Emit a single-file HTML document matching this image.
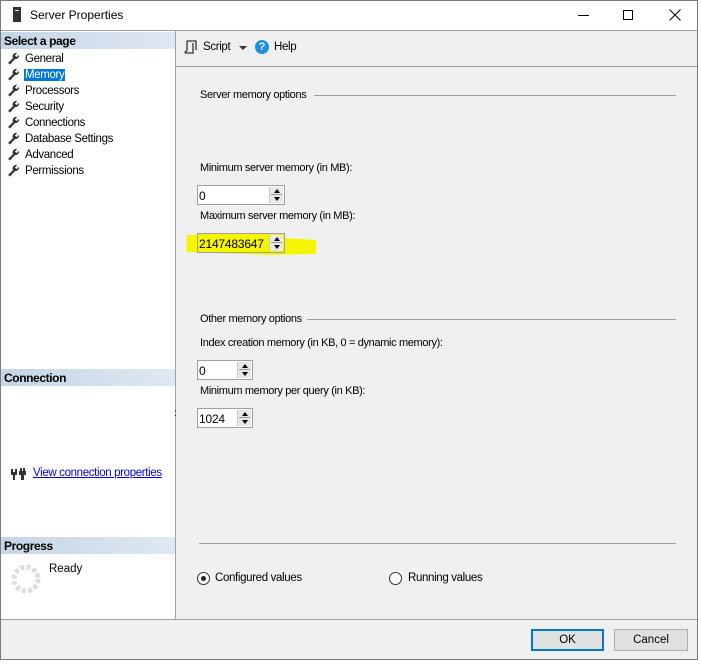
<!DOCTYPE html>
<html><head><style>
*{margin:0;padding:0;box-sizing:border-box}
body{width:701px;height:666px;background:#fff;font-family:"Liberation Sans",sans-serif;font-size:11px;color:#000;position:relative;overflow:hidden}
.a{position:absolute;white-space:nowrap}
.win{position:absolute;left:0;top:0;width:698px;height:660px;background:#f0f0f0}
.frame{position:absolute;left:0;top:0;width:698px;height:660px;border:1px solid #7a7a7a;pointer-events:none}
.hdr{position:absolute;left:1px;width:174px;height:17px;background:linear-gradient(to right,#c5d5e6,#dfe8f2);font-weight:bold;font-size:12px;padding:2px 3px;letter-spacing:-0.4px}
.box{position:absolute;background:#fff;border:1px solid #a0a0a0;height:20px}
.box span{position:absolute;left:1px;top:3px;font-size:12px;letter-spacing:-0.2px}
.sp{position:absolute;right:1px;top:1px;width:14px;height:16px;background:#e8e8e8;border-left:1px solid #c8c8c8}
.sp:before{content:"";position:absolute;left:4px;top:2px;border:3px solid transparent;border-bottom:4px solid #000;border-top:0}
.sp:after{content:"";position:absolute;left:4px;top:10px;border:3px solid transparent;border-top:4px solid #000;border-bottom:0}
.sp i{position:absolute;left:1px;right:1px;top:7px;height:1px;background:#999}
.ln{position:absolute;height:1px;background:#a0a0a0}
.t{letter-spacing:-0.35px}
</style></head><body>
<div class="win">
<div class="a" style="left:0;top:0;width:698px;height:31px;background:#fff;border-bottom:1px solid #a0a0a0"></div>
<div class="a" style="left:13px;top:7px;width:8px;height:15px;background:#333"></div>
<div class="a" style="left:15px;top:10px;width:4px;height:1px;background:#fff"></div>
<div class="a" style="left:30px;top:8px;font-size:12px">Server Properties</div>
<div class="a" style="left:578px;top:15px;width:11px;height:1px;background:#000"></div>
<div class="a" style="left:623px;top:10px;width:10px;height:10px;border:1px solid #000"></div>
<svg class="a" style="left:669px;top:9px" width="12" height="12"><path d="M0.5 0.5 L11.5 11.5 M11.5 0.5 L0.5 11.5" stroke="#000" stroke-width="1"/></svg>
<!-- left panel -->
<div class="a" style="left:0;top:31px;width:176px;height:588px;background:#fff;border-right:1px solid #a0a0a0"></div>
<div class="hdr" style="top:32px">Select a page</div>
<div class="hdr" style="top:369px">Connection</div>
<div class="hdr" style="top:537px">Progress</div>
<div class="a t" style="left:25px;top:51px;line-height:16px;font-size:11.5px">General<br><span style="background:#0078d7;color:#fff;padding:0 1px;margin-left:-1px">Memory</span><br>Processors<br>Security<br>Connections<br>Database Settings<br>Advanced<br>Permissions</div>
<svg class="a" style="left:7px;top:52px" width="14" height="128">
<g fill="#333">
<path id="wr" d="M1 11 L6 6 A3.5 3.5 0 0 1 10 1 L8 3.5 L9.5 5 L12 3 A3.5 3.5 0 0 1 8 7 L3 12.5 Z"/>
<use href="#wr" y="16"/><use href="#wr" y="32"/><use href="#wr" y="48"/><use href="#wr" y="64"/><use href="#wr" y="80"/><use href="#wr" y="96"/><use href="#wr" y="112"/>
</g></svg>
<svg class="a" style="left:10px;top:467px" width="16" height="14"><g fill="#333"><rect x="1" y="2" width="2" height="4"/><rect x="5" y="2" width="2" height="4"/><rect x="1" y="5" width="6" height="3"/><rect x="3" y="8" width="2" height="5"/><rect x="10" y="1" width="2" height="3"/><rect x="13" y="1" width="2" height="3"/><rect x="9" y="4" width="7" height="4"/><rect x="11" y="8" width="3" height="5"/></g></svg>
<div class="a t" style="left:33px;top:467px;color:#00e;text-decoration:underline;font-size:11.5px">View connection properties</div>
<svg class="a" style="left:10px;top:563px" width="32" height="32"><circle cx="16" cy="16" r="12" fill="none" stroke="#ddd" stroke-width="5" stroke-dasharray="4 2.3"/></svg>
<div class="a" style="left:49px;top:563px;font-size:11.5px">Ready</div>
<div class="a" style="left:174px;top:408px;font-size:10px">:</div>
<!-- right -->
<div class="a" style="left:176px;top:66px;width:522px;height:1px;background:#a0a0a0"></div>
<svg class="a" style="left:184px;top:40px" width="14" height="14"><path d="M3 1 H12 V10 M1 13 H9 V3 M3 1 V11 M1 13 Q1 11 3 11" fill="none" stroke="#333" stroke-width="1.3"/></svg>
<div class="a t" style="left:203px;top:41px;font-size:11.5px">Script</div>
<div class="a" style="left:239px;top:46px;border:4px solid transparent;border-top:4px solid #333"></div>
<div class="a" style="left:255px;top:40px;width:14px;height:14px;border-radius:50%;background:#1e90e0;color:#fff;font-weight:bold;font-size:11px;text-align:center;line-height:14px">?</div>
<div class="a t" style="left:274px;top:41px;font-size:11.5px">Help</div>
<div class="a t" style="left:200px;top:89px">Server memory options</div>
<div class="ln" style="left:314px;top:95px;width:362px"></div>
<div class="a t" style="left:200px;top:162px">Minimum server memory (in MB):</div>
<div class="box" style="left:197px;top:185px;width:88px"><span>0</span><div class="sp"><i></i></div></div>
<div class="a t" style="left:200px;top:210px">Maximum server memory (in MB):</div>
<svg class="a" style="left:184px;top:232px" width="134" height="26"><path d="M3 3 L80 2 L98 6 L132 8 L132 22 L85 23 L2 20 Z" fill="#f5f500"/></svg>
<div class="box" style="left:197px;top:233px;width:88px;background:#f5f500"><span>2147483647</span><div class="sp"><i></i></div></div>
<div class="a t" style="left:200px;top:313px">Other memory options</div>
<div class="ln" style="left:307px;top:319px;width:369px"></div>
<div class="a t" style="left:200px;top:337px">Index creation memory (in KB, 0 = dynamic memory):</div>
<div class="box" style="left:197px;top:360px;width:56px"><span>0</span><div class="sp"><i></i></div></div>
<div class="a t" style="left:200px;top:385px">Minimum memory per query (in KB):</div>
<div class="box" style="left:197px;top:408px;width:56px"><span>1024</span><div class="sp"><i></i></div></div>
<div class="ln" style="left:199px;top:543px;width:477px"></div>
<div class="a" style="left:197px;top:572px;width:13px;height:13px;border:1px solid #333;border-radius:50%;background:#fff"></div>
<div class="a" style="left:201px;top:576px;width:5px;height:5px;border-radius:50%;background:#222"></div>
<div class="a t" style="left:215px;top:572px;font-size:11.5px">Configured values</div>
<div class="a" style="left:389px;top:572px;width:13px;height:13px;border:1px solid #333;border-radius:50%;background:#fff"></div>
<div class="a t" style="left:408px;top:572px;font-size:11.5px">Running values</div>
<!-- bottom -->
<div class="a" style="left:0;top:619px;width:698px;height:1px;background:#a0a0a0"></div>
<div class="a" style="left:531px;top:629px;width:73px;height:22px;border:2px solid #0078d7;background:#e1e1e1;text-align:center;line-height:18px;font-size:11.5px">OK</div>
<div class="a" style="left:614px;top:629px;width:74px;height:22px;border:1px solid #adadad;background:#e1e1e1;text-align:center;line-height:20px;font-size:11.5px">Cancel</div>
</div>
<div class="frame"></div>
</body></html>
